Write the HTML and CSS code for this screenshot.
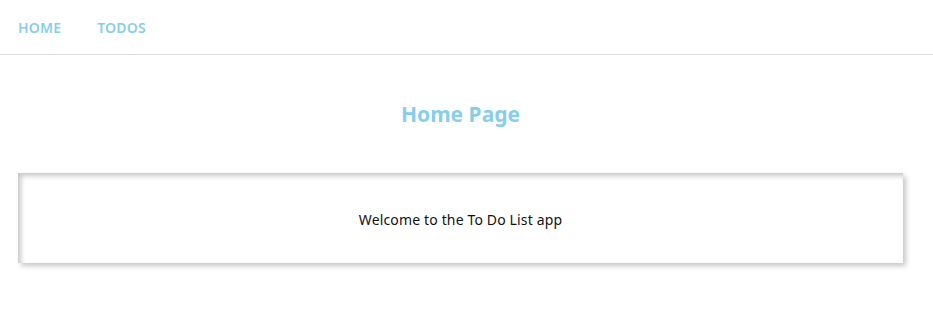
FILE: index.html
```html
<!DOCTYPE html>
<html>
<head>
<meta charset="utf-8">
<link rel="stylesheet" href="styles.css">
</head>
<body>
<nav class="nav">
  <a class="nav-link" href="#">Home</a>
  <a class="nav-link" href="#">Todos</a>
</nav>
<main class="main">
  <h1 class="title">Home Page</h1>
  <div class="card">Welcome to the To Do List app</div>
</main>
</body>
</html>
```
FILE: styles.css
```css
html, body {
  margin: 0;
  padding: 0;
  background: #fff;
}
body {
  font-family: "Noto Sans", "Open Sans", sans-serif;
  color: #111;
  min-height: 318px;
}
.nav {
  height: 54px;
  border-bottom: 1px solid #dcdcdc;
  display: flex;
  align-items: center;
  gap: 36px;
  padding-left: 18px;
}
.nav-link {
  color: #87ceeb;
  text-decoration: none;
  text-transform: uppercase;
  font-weight: 600;
  font-size: 14px;
  letter-spacing: 0.2px;
}
.main {
  padding: 0 30px 40px 18px;
}
.title {
  margin: 44px 0 0;
  text-align: center;
  font-size: 21px;
  line-height: 30px;
  font-weight: 700;
  color: #87ceeb;
}
.card {
  margin-top: 44px;
  height: 90px;
  display: flex;
  align-items: center;
  justify-content: center;
  font-size: 14px;
  letter-spacing: 0.15px;
  padding-top: 2px;
  box-sizing: border-box;
  box-shadow: 3px 3px 5px rgba(0,0,0,0.22), inset 3px 3px 5px rgba(0,0,0,0.22);
}
```
